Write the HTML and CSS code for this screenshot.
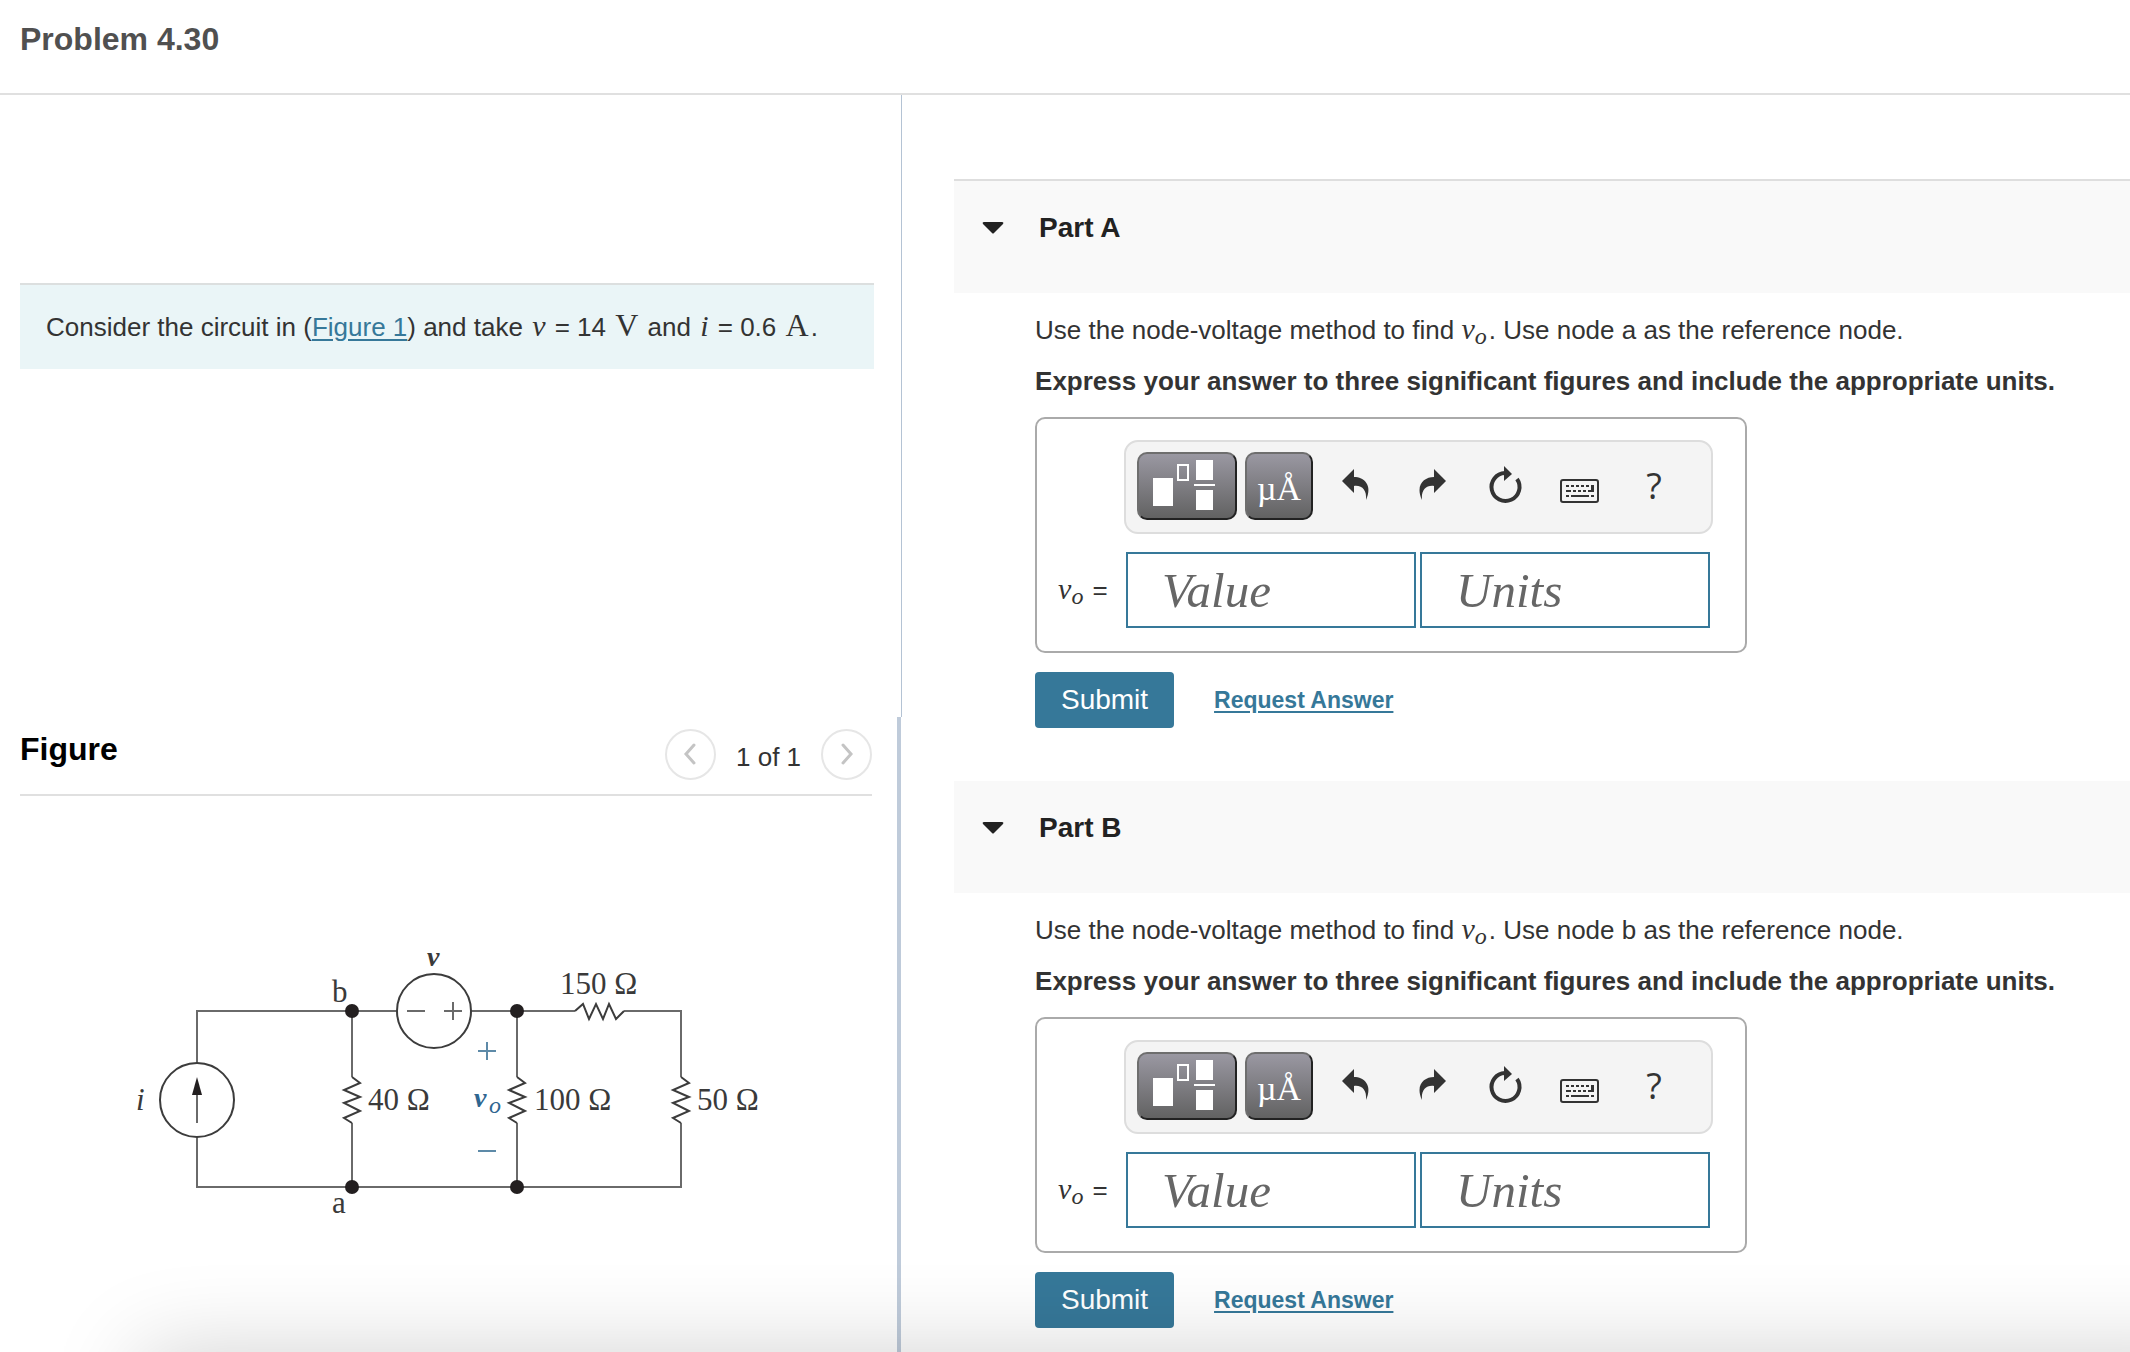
FILE: index.html
```
<!DOCTYPE html>
<html lang="en">
<head>
    <meta charset="UTF-8">
    <meta name="viewport" content="width=device-width, initial-scale=1.0">
    <title>Problem 4.30</title>
    <link rel="stylesheet" href="styles.css">
</head>
<body>
    <header class="page-header">
        <h1>Problem 4.30</h1>
    </header>

    <main class="columns">
        <div class="left">
            <section class="intro">
                <p class="intro-box">Consider the circuit in (<a href="#figure">Figure 1</a>) and take <i class="math">v</i> = 14 <span class="math">V</span> and <i class="math">i</i> = 0.6 <span class="math">A</span>.</p>
            </section>

            <section class="figure" id="figure">
                <div class="figure-bar">
                    <h2>Figure</h2>
                    <div class="pager">
                        <button type="button" class="round" aria-label="Previous figure">
                            <svg width="14" height="22" viewBox="0 0 14 22"><path d="M11 2L3 11l8 9"/></svg>
                        </button>
                        <span class="count">1 of 1</span>
                        <button type="button" class="round" aria-label="Next figure">
                            <svg width="14" height="22" viewBox="0 0 14 22"><path d="M3 2l8 9-8 9"/></svg>
                        </button>
                    </div>
                </div>

                <svg class="circuit" width="650" height="290" viewBox="0 0 650 290">
                    <!-- wires -->
                    <path class="wire" d="M67 124V72H267M341 72H445M494 72H551V138M551 184V248H67V198"/>
                    <path class="wire" d="M222 72V138M222 184V248M387 72V138M387 184V248"/>
                    <!-- resistors -->
                    <path class="part-line" d="M222 138l8 6-16 7 16 7-16 6 16 8-16 7 8 5"/>
                    <path class="part-line" d="M387 138l8 6-16 7 16 7-16 6 16 8-16 7 8 5"/>
                    <path class="part-line" d="M551 138l8 6-16 7 16 7-16 6 16 8-16 7 8 5"/>
                    <path class="part-line" d="M445 72l8-7 6 15 7-15 7 15 6-15 7 15 8-8"/>
                    <!-- sources -->
                    <circle class="part-line" cx="67" cy="161" r="37"/>
                    <path class="wire" d="M67 184V152"/>
                    <path class="dot" d="M67 138l5 18h-10z"/>
                    <circle class="part-line" cx="304" cy="72" r="37"/>
                    <path class="wire" d="M277 72h18M314 72h18M323 63v18"/>
                    <!-- nodes -->
                    <circle class="dot" cx="222" cy="72" r="7"/>
                    <circle class="dot" cx="222" cy="248" r="7"/>
                    <circle class="dot" cx="387" cy="72" r="7"/>
                    <circle class="dot" cx="387" cy="248" r="7"/>
                    <!-- output voltage -->
                    <path class="wire blue" d="M348 112h18M357 103v18M348 212h18"/>
                    <text class="blue-text var" x="344" y="168">v</text>
                    <text class="blue-text small" x="359" y="174">o</text>

                    <text x="202" y="63">b</text>
                    <text x="202" y="274">a</text>
                    <text class="ital" x="6" y="171">i</text>
                    <text class="ital var" x="297" y="27">v</text>
                    <text x="238" y="171">40 Ω</text>
                    <text x="404" y="171">100 Ω</text>
                    <text x="567" y="171">50 Ω</text>
                    <text x="430" y="55">150 Ω</text>
                </svg>
            </section>
        </div>

        <div class="right">
            <section class="part">
                <div class="part-header">
                    <svg width="22" height="12" viewBox="0 0 22 12"><path d="M2 0h18q2 0 1 2l-9 9q-1 1-2 0L1 2Q0 0 2 0z"/></svg>
                    <h2>Part A</h2>
                </div>
                <div class="part-body">
                    <p>Use the node-voltage method to find <i class="math">v<sub>o</sub></i>. Use node a as the reference node.</p>
                    <p class="strong">Express your answer to three significant figures and include the appropriate units.</p>
                    <div class="answer">
                        <div class="toolbar">
                            <button type="button" class="dark wide" aria-label="Templates">
                                <svg width="72" height="56" viewBox="0 0 72 56"><path fill="#fff" d="M2 20h20v28H2zM45 2h17v20H45zM43 26h21v2H43zM45 32h17v20H45z"/><path fill="none" stroke="#fff" stroke-width="2" d="M27 7h10v15H27z"/></svg>
                            </button>
                            <button type="button" class="dark">µÅ</button>
                            <button type="button" class="tool" aria-label="Undo">
                                <svg width="32" height="34" viewBox="0 0 32 34"><path d="M0 12L12 0v8c10 0 19 8 12 23 1-10-4-15-12-14v7z"/></svg>
                            </button>
                            <button type="button" class="tool" aria-label="Redo">
                                <svg width="32" height="34" viewBox="0 0 32 34"><path d="M30 12L18 0v8C8 8-1 16 6 31 5 21 10 16 18 17v7z"/></svg>
                            </button>
                            <button type="button" class="tool" aria-label="Reset">
                                <svg width="36" height="40" viewBox="0 0 36 40"><path fill="none" stroke="#333" stroke-width="4" d="M17 7a14 14 0 1 0 12 6"/><path d="M16 0l8 8-8 7z"/></svg>
                            </button>
                            <button type="button" class="tool" aria-label="Keyboard">
                                <svg class="keys" width="40" height="24" viewBox="0 0 40 24"><rect x="1" y="1" width="37" height="22" rx="2" fill="none" stroke="#333" stroke-width="2"/><path d="M6 6h3v2H6zM11 6h3v2h-3zM16 6h3v2h-3zM21 6h3v2h-3zM26 6h3v2h-3zM31 6h3v7h-6v-2h3zM6 11h5v2H6zM13 11h3v2h-3zM18 11h3v2h-3zM23 11h3v2h-3zM6 16h3v2H6zM11 16h18v2H11zM31 16h3v2h-3z"/></svg>
                            </button>
                            <button type="button" class="tool help" aria-label="Help">?</button>
                        </div>
                        <label for="valueA"><i class="math">v<sub>o</sub></i> =</label>
                        <div class="fields">
                            <input type="text" id="valueA" placeholder="Value">
                            <input type="text" aria-label="Units" placeholder="Units">
                        </div>
                    </div>
                    <div class="actions">
                        <button type="submit" class="submit">Submit</button>
                        <a href="#">Request Answer</a>
                    </div>
                </div>
            </section>

            <section class="part">
                <div class="part-header">
                    <svg width="22" height="12" viewBox="0 0 22 12"><path d="M2 0h18q2 0 1 2l-9 9q-1 1-2 0L1 2Q0 0 2 0z"/></svg>
                    <h2>Part B</h2>
                </div>
                <div class="part-body">
                    <p>Use the node-voltage method to find <i class="math">v<sub>o</sub></i>. Use node b as the reference node.</p>
                    <p class="strong">Express your answer to three significant figures and include the appropriate units.</p>
                    <div class="answer">
                        <div class="toolbar">
                            <button type="button" class="dark wide" aria-label="Templates">
                                <svg width="72" height="56" viewBox="0 0 72 56"><path fill="#fff" d="M2 20h20v28H2zM45 2h17v20H45zM43 26h21v2H43zM45 32h17v20H45z"/><path fill="none" stroke="#fff" stroke-width="2" d="M27 7h10v15H27z"/></svg>
                            </button>
                            <button type="button" class="dark">µÅ</button>
                            <button type="button" class="tool" aria-label="Undo">
                                <svg width="32" height="34" viewBox="0 0 32 34"><path d="M0 12L12 0v8c10 0 19 8 12 23 1-10-4-15-12-14v7z"/></svg>
                            </button>
                            <button type="button" class="tool" aria-label="Redo">
                                <svg width="32" height="34" viewBox="0 0 32 34"><path d="M30 12L18 0v8C8 8-1 16 6 31 5 21 10 16 18 17v7z"/></svg>
                            </button>
                            <button type="button" class="tool" aria-label="Reset">
                                <svg width="36" height="40" viewBox="0 0 36 40"><path fill="none" stroke="#333" stroke-width="4" d="M17 7a14 14 0 1 0 12 6"/><path d="M16 0l8 8-8 7z"/></svg>
                            </button>
                            <button type="button" class="tool" aria-label="Keyboard">
                                <svg class="keys" width="40" height="24" viewBox="0 0 40 24"><rect x="1" y="1" width="37" height="22" rx="2" fill="none" stroke="#333" stroke-width="2"/><path d="M6 6h3v2H6zM11 6h3v2h-3zM16 6h3v2h-3zM21 6h3v2h-3zM26 6h3v2h-3zM31 6h3v7h-6v-2h3zM6 11h5v2H6zM13 11h3v2h-3zM18 11h3v2h-3zM23 11h3v2h-3zM6 16h3v2H6zM11 16h18v2H11zM31 16h3v2h-3z"/></svg>
                            </button>
                            <button type="button" class="tool help" aria-label="Help">?</button>
                        </div>
                        <label for="valueB"><i class="math">v<sub>o</sub></i> =</label>
                        <div class="fields">
                            <input type="text" id="valueB" placeholder="Value">
                            <input type="text" aria-label="Units" placeholder="Units">
                        </div>
                    </div>
                    <div class="actions">
                        <button type="submit" class="submit">Submit</button>
                        <a href="#">Request Answer</a>
                    </div>
                </div>
            </section>
        </div>
    </main>

    <div class="bottom-shadow"></div>
</body>
</html>
```
FILE: styles.css
```
* {
    box-sizing: border-box;
}
body {
    margin: 0;
    height: 100vh;
    display: flex;
    flex-direction: column;
    overflow: hidden;
    background-color: #fff;
    color: #333;
    font-family: "Liberation Sans", Arial, sans-serif;
    font-size: 26px;
    line-height: 40px;
}
h1, h2, p {
    margin: 0;
}
a {
    color: #367899;
    text-underline-offset: 3px;
}
button {
    padding: 0;
    border: none;
    background: none;
    font-family: inherit;
    cursor: pointer;
}
.math {
    margin-right: 2px;
    font-family: "Liberation Serif", "Times New Roman", serif;
    font-size: 32px;
    line-height: 32px;
}
i.math {
    font-size: 30px;
}
.math sub {
    font-size: 24px;
    line-height: 0;
    vertical-align: -5px;
}

.page-header {
    padding: 19px 20px 34px;
    border-bottom: 2px solid #e0e0e0;
}
.page-header h1 {
    color: #505050;
    font-size: 32px;
}
.columns {
    flex: 1;
    display: grid;
    grid-template-columns: 42.35% 1fr;
}

/* left column */
.left {
    display: flex;
    flex-direction: column;
}
.intro {
    flex: 0 0 46vh;
    padding: 188px 27px 0 20px;
    border-right: 1px solid #b4c3d4;
}
.intro-box {
    padding: 22px 26px;
    border-top: 2px solid #dcdfdf;
    background-color: #eaf5f7;
}
.intro-box .math {
    margin: 0 2px;
}
.figure {
    flex: 1;
    margin-right: 1px;
    padding: 12px 25px 0 20px;
    border-right: 4px solid #bfcbda;
}
.figure-bar {
    display: flex;
    justify-content: space-between;
    align-items: center;
    padding-bottom: 14px;
    border-bottom: 2px solid #e0e0e0;
}
.figure-bar h2 {
    padding-bottom: 10px;
    color: #000;
    font-size: 32px;
}
.pager {
    display: flex;
    align-items: center;
    gap: 20px;
}
.count {
    padding-top: 6px;
}
.round {
    display: flex;
    align-items: center;
    justify-content: center;
    width: 51px;
    height: 51px;
    border: 2px solid #e6e6e6;
    border-radius: 50%;
}
.round svg {
    fill: none;
    stroke: #c4c4c4;
    stroke-width: 3;
    stroke-linecap: round;
}
.circuit {
    display: block;
    margin: 143px 0 0 110px;
    font-family: "Liberation Serif", "Times New Roman", serif;
    font-size: 31px;
    fill: #3a3a3a;
}
.wire {
    fill: none;
    stroke: #6a6a6a;
    stroke-width: 2;
}
.part-line {
    fill: none;
    stroke: #3c3c3c;
    stroke-width: 2;
}
.dot {
    fill: #231f20;
}
.blue {
    stroke: #5d8aa8;
}
.blue-text {
    fill: #2f6690;
    font-style: italic;
}
.ital {
    font-style: italic;
}
.var {
    font-size: 28px;
    font-weight: bold;
}
.small {
    font-size: 24px;
}

/* right column */
.right {
    padding: 84px 0 0 52px;
}
.part:first-child {
    border-top: 2px solid #dedede;
}
.part-header {
    display: flex;
    align-items: center;
    gap: 35px;
    padding: 27px 28px 45px;
    background-color: #f9f9f9;
    color: #222;
}
.part-header svg {
    fill: #222;
}
.part-header h2 {
    font-size: 28px;
}
.part-body {
    padding: 17px 0 53px 81px;
}
.strong {
    margin-top: 11px;
    font-weight: bold;
}
.answer {
    display: inline-grid;
    grid-template-columns: 66px 589px;
    row-gap: 18px;
    margin-top: 16px;
    padding: 21px 32px 23px 21px;
    border: 2px solid #aaa;
    border-radius: 10px;
    vertical-align: top;
}
.toolbar {
    grid-column: 2;
    display: flex;
    align-items: center;
    height: 94px;
    padding: 0 11px 2px;
    border: 2px solid #ddd;
    border-radius: 14px;
    background-color: #f4f4f4;
}
.dark {
    display: flex;
    align-items: center;
    justify-content: center;
    width: 68px;
    height: 68px;
    margin-right: 8px;
    padding-top: 6px;
    border: 2px solid #6e6e6e;
    border-right-color: #222;
    border-bottom-color: #222;
    border-radius: 10px;
    background: linear-gradient(#9a98a2, #626262);
    color: #fff;
    font-family: "Liberation Serif", "Times New Roman", serif;
    font-size: 34px;
}
.wide {
    width: 100px;
    padding-top: 0;
}
.tool {
    display: flex;
    align-items: center;
    justify-content: center;
    width: 74px;
    height: 68px;
    color: #333;
    font-family: "Open Sans", sans-serif;
    font-size: 36px;
}
.tool svg {
    fill: #333;
}
.tool .keys {
    margin-top: 10px;
}
.help {
    padding-bottom: 2px;
}
.answer label {
    align-self: center;
}
.fields {
    display: flex;
    gap: 4px;
    padding: 0 3px 0 2px;
}
.fields input {
    flex: 1;
    min-width: 0;
    height: 76px;
    padding: 0 34px;
    border: 2px solid #367899;
    border-radius: 0;
    color: #333;
    font-family: "Liberation Serif", "Times New Roman", serif;
    font-size: 49px;
}
.fields input::placeholder {
    color: #666;
    font-style: italic;
}
.actions {
    display: flex;
    align-items: center;
    gap: 40px;
    margin-top: 19px;
}
.actions a {
    font-size: 23px;
    font-weight: bold;
}
.submit {
    width: 139px;
    height: 56px;
    border-radius: 4px;
    background-color: #367899;
    color: #fff;
    font-size: 28px;
}

.bottom-shadow {
    position: fixed;
    top: 100%;
    left: 140px;
    right: -100px;
    height: 200px;
    box-shadow: 0 0 90px rgba(0, 0, 0, 0.18);
    pointer-events: none;
}
```
